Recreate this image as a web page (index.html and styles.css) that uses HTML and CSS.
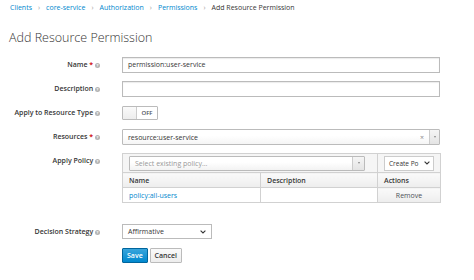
FILE: index.html
```html
<!DOCTYPE html>
<html lang="en">
<head>
  <meta charset="UTF-8">
  <title>Add Resource Permission</title>
  <link rel="stylesheet" href="styles.css">
</head>
<body>
  <ol class="breadcrumb">
    <li><a href="#">Clients</a></li>
    <li><a href="#">core-service</a></li>
    <li><a href="#">Authorization</a></li>
    <li><a href="#">Permissions</a></li>
    <li class="active">Add Resource Permission</li>
  </ol>

  <h1 class="page-title">Add Resource Permission</h1>

  <form class="form">
    <div class="form-group">
      <label class="form-label">Name <span class="required">*</span> <span class="help">?</span></label>
      <div class="form-control">
        <div class="input">permission:user-service</div>
      </div>
    </div>

    <div class="form-group">
      <label class="form-label">Description <span class="help">?</span></label>
      <div class="form-control">
        <div class="input"></div>
      </div>
    </div>

    <div class="form-group">
      <label class="form-label">Apply to Resource Type <span class="help">?</span></label>
      <div class="form-control">
        <div class="switch">
          <span class="switch-label"></span>
          <span class="switch-off">OFF</span>
        </div>
      </div>
    </div>

    <div class="form-group">
      <label class="form-label">Resources <span class="required">*</span> <span class="help">?</span></label>
      <div class="form-control">
        <div class="select2">
          <span class="select2-value">resource:user-service</span>
          <span class="select2-clear">&times;</span>
          <span class="select2-arrow"><span class="caret"></span></span>
        </div>
      </div>
    </div>

    <div class="form-group group-policy">
      <label class="form-label">Apply Policy <span class="help">?</span></label>
      <div class="form-control">
        <table class="policy-table">
          <colgroup>
            <col class="col-name">
            <col class="col-desc">
            <col class="col-actions">
          </colgroup>
          <thead>
            <tr class="toolbar">
              <th colspan="2">
                <div class="select2 policy-select">
                  <span class="select2-placeholder">Select existing policy...</span>
                  <span class="select2-arrow"><span class="caret"></span></span>
                </div>
              </th>
              <th>
                <div class="dropdown">
                  <span class="dropdown-text">Create Po</span>
                  <svg class="chevron" width="6" height="4" viewBox="0 0 6 4"><path d="M0.6 0.6 L3 3 L5.4 0.6" fill="none" stroke="#363636" stroke-width="1.1"/></svg>
                </div>
              </th>
            </tr>
            <tr class="head">
              <th>Name</th>
              <th>Description</th>
              <th>Actions</th>
            </tr>
          </thead>
          <tbody>
            <tr>
              <td><a href="#">policy:all-users</a></td>
              <td></td>
              <td class="action-cell"><span class="btn-remove">Remove</span></td>
            </tr>
          </tbody>
        </table>
      </div>
    </div>

    <div class="form-group">
      <label class="form-label">Decision Strategy <span class="help">?</span></label>
      <div class="form-control">
        <div class="select-native">
          <span>Affirmative</span>
          <svg class="chevron" width="6" height="4" viewBox="0 0 6 4"><path d="M0.6 0.6 L3 3 L5.4 0.6" fill="none" stroke="#363636" stroke-width="1.1"/></svg>
        </div>
      </div>
    </div>

    <div class="form-group buttons">
      <div class="form-label"></div>
      <div class="form-control">
        <button type="button" class="btn btn-primary">Save</button>
        <button type="button" class="btn btn-default">Cancel</button>
      </div>
    </div>
  </form>
</body>
</html>
```

FILE: styles.css
```css
body {
  margin: 0;
  font-family: 'Open Sans', 'Liberation Sans', sans-serif;
  font-size: 7px;
  color: #363636;
  background: #fff;
}

a {
  color: #0088ce;
  text-decoration: none;
}

.breadcrumb {
  list-style: none;
  margin: 0;
  padding: 2px 10px 0;
  display: flex;
  line-height: 12px;
  font-size: 7px;
}

.breadcrumb li + li::before {
  content: '\203A';
  color: #9c9c9c;
  padding: 0 6px;
}

.breadcrumb .active {
  color: #363636;
}

.page-title {
  margin: 14px 0 9px 9px;
  font-size: 12.5px;
  line-height: 20px;
  font-weight: 300;
  color: #363636;
}

.form-group {
  display: flex;
  align-items: flex-start;
  margin-bottom: 8px;
}

.form-label {
  width: 100px;
  margin-right: 22px;
  text-align: right;
  font-weight: 600;
  line-height: 16px;
  white-space: nowrap;
}

.required {
  color: #c00;
}

.help {
  display: inline-block;
  width: 5px;
  height: 5px;
  border-radius: 50%;
  background: #b3b3b3;
  color: #fff;
  font-size: 4px;
  line-height: 5px;
  text-align: center;
  font-weight: 700;
  vertical-align: 0.5px;
}

.form-control {
  width: 318px;
}

.input {
  box-sizing: border-box;
  height: 16px;
  border: 1px solid #bbb;
  box-shadow: inset 0 1px 1px rgba(3, 3, 3, 0.08);
  padding: 0 5px;
  line-height: 14px;
  white-space: nowrap;
}

.switch {
  display: flex;
  width: 36px;
  height: 14px;
  margin-top: 1px;
  box-sizing: border-box;
  border: 1px solid #bbb;
  border-radius: 1px;
}

.switch-label {
  width: 13px;
  border-right: 1px solid #ccc;
  background: linear-gradient(#fafafa, #ededed);
}

.switch-off {
  flex: 1;
  text-align: center;
  font-weight: 600;
  font-size: 6px;
  line-height: 12px;
  background: #fff;
  color: #4d5258;
}

.select2 {
  box-sizing: border-box;
  display: flex;
  align-items: center;
  height: 16px;
  border: 1px solid #bbb;
  border-radius: 1px;
  background: linear-gradient(#fff 40%, #f5f5f5);
  padding-left: 5px;
}

.select2-value,
.select2-placeholder {
  flex: 1;
  white-space: nowrap;
}

.select2-placeholder {
  color: #999;
}

.select2-clear {
  color: #888;
  font-size: 7px;
  margin-right: 5px;
}

.select2-arrow {
  width: 9px;
  height: 100%;
  border-left: 1px solid #ccc;
  background: linear-gradient(#f5f5f5, #e4e4e4);
  display: flex;
  align-items: center;
  justify-content: center;
}

.caret {
  width: 0;
  height: 0;
  border-left: 1.5px solid transparent;
  border-right: 1.5px solid transparent;
  border-top: 2px solid #888;
}

.policy-table {
  width: 318px;
  border-collapse: collapse;
  border: 1px solid #d1d1d1;
  table-layout: fixed;
}

.col-name {
  width: 138px;
}

.col-desc {
  width: 117px;
}

.col-actions {
  width: 63px;
}

.policy-table th,
.policy-table td {
  border: 1px solid #d1d1d1;
  padding: 0 6px;
  text-align: left;
  height: 14px;
  line-height: 13px;
}

.toolbar th {
  background: #f5f5f5;
  height: 18px;
  padding: 0 6px;
}

.toolbar th:first-child {
  padding-right: 12px;
}

.policy-select {
  height: 15px;
  background: linear-gradient(#fff 40%, #f3f3f3);
}

.policy-select .select2-arrow {
  width: 11px;
}

.policy-select .select2-placeholder {
  font-weight: 400;
}

.dropdown {
  box-sizing: border-box;
  display: flex;
  align-items: center;
  justify-content: space-between;
  gap: 3px;
  height: 15px;
  border: 1px solid #ccc;
  background: #fff;
  padding: 0 3px 0 4px;
  font-weight: 400;
  font-size: 6.5px;
}

.dropdown-text {
  white-space: nowrap;
}

.chevron {
  flex: none;
}

.head th {
  background: linear-gradient(#fafafa, #ededed);
  font-weight: 600;
}

.policy-table .action-cell {
  background: linear-gradient(#fafafa, #ededed);
  text-align: center;
}

.btn-remove {
  color: #4d5258;
}

.group-policy {
  margin-bottom: 21px;
}

.select-native {
  box-sizing: border-box;
  display: flex;
  align-items: center;
  justify-content: space-between;
  width: 90px;
  height: 15px;
  border: 1px solid #bbb;
  padding: 0 5px;
  background: #fff;
}

.buttons {
  margin-top: 8px;
}

.btn {
  font-family: inherit;
  font-size: 7px;
  height: 15px;
  padding: 0 4px;
  border-radius: 1px;
  margin: 0;
  line-height: 13px;
  cursor: pointer;
}

.btn-primary {
  background: linear-gradient(#39a5dc, #0088ce);
  border: 1px solid #00659c;
  color: #fff;
  font-weight: 600;
}

.btn-default {
  background: linear-gradient(#fafafa, #ededed);
  border: 1px solid #bbb;
  color: #363636;
  font-weight: 600;
}
```
